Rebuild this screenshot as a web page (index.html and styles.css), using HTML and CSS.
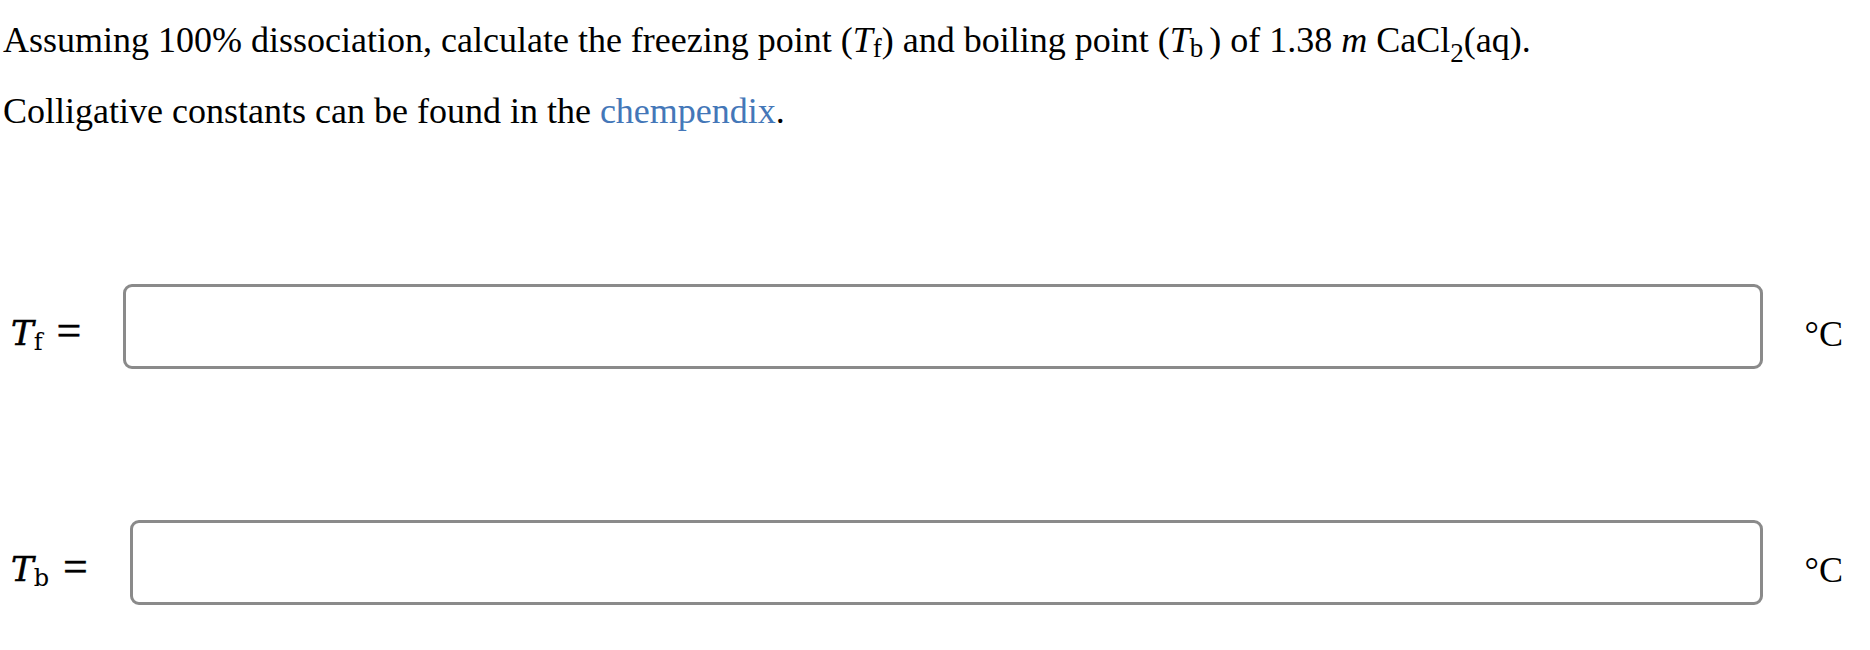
FILE: index.html
```html
<!DOCTYPE html>
<html>
<head>
<meta charset="utf-8">
<link rel="stylesheet" href="styles.css">
</head>
<body>
<div class="page">
  <p class="q q1">Assuming 100% dissociation, calculate the freezing point (<i>T</i><sub class="sf">f</sub>) and boiling point (<i>T</i><sub class="sb">b</sub>) of 1.38 <i>m</i> CaCl<sub class="s2">2</sub>(aq).</p>
  <p class="q q2">Colligative constants can be found in the <a class="link" href="#">chempendix</a>.</p>

  <div class="row row1">
    <div class="label"><span class="mt">T</span><span class="msub">f</span><span class="eq">=</span></div>
    <div class="box"></div>
    <div class="unit">°C</div>
  </div>

  <div class="row row2">
    <div class="label"><span class="mt">T</span><span class="msub">b</span><span class="eq">=</span></div>
    <div class="box"></div>
    <div class="unit">°C</div>
  </div>
</div>
</body>
</html>
```

FILE: styles.css
```css
html, body {
  margin: 0;
  padding: 0;
  background: #ffffff;
}

.page {
  padding: 0 27px 0 3px;
  font-family: "Liberation Serif", "Times New Roman", serif;
  font-size: 36px;
  color: #000;
}

.q {
  margin: 0;
  line-height: 42px;
}

.q1 {
  margin-top: 19px;
}

.q2 {
  margin-top: 29px;
}

sub {
  font-size: 27px;
  line-height: 0;
  vertical-align: -5px;
}

.sb {
  margin-right: 6px;
}

.s2 {
  vertical-align: -10px;
}

.link {
  color: #4477b8;
  text-decoration: none;
}

.row {
  display: flex;
  align-items: center;
  height: 85px;
}

.row1 {
  margin-top: 152px;
}

.row2 {
  margin-top: 151px;
}

.label {
  display: flex;
  align-items: baseline;
  padding-left: 8px;
  margin-right: 42px;
  margin-top: 8px;
  font-family: "DejaVu Serif", serif;
  white-space: nowrap;
}

.mt {
  font-style: italic;
  font-size: 34px;
  -webkit-text-stroke: 0.6px #000;
}

.msub {
  font-size: 24px;
  position: relative;
  top: 5px;
}

.eq {
  font-family: "Liberation Serif", serif;
  font-size: 44px;
  margin-left: 14px;
  -webkit-text-stroke: 0.4px #000;
}

.box {
  flex: 1;
  height: 85px;
  box-sizing: border-box;
  border: 3px solid #8a8a8a;
  border-radius: 9px;
  background: #fff;
}

.unit {
  margin-left: 42px;
  margin-top: 14px;
  font-size: 36px;
  white-space: nowrap;
}
```
